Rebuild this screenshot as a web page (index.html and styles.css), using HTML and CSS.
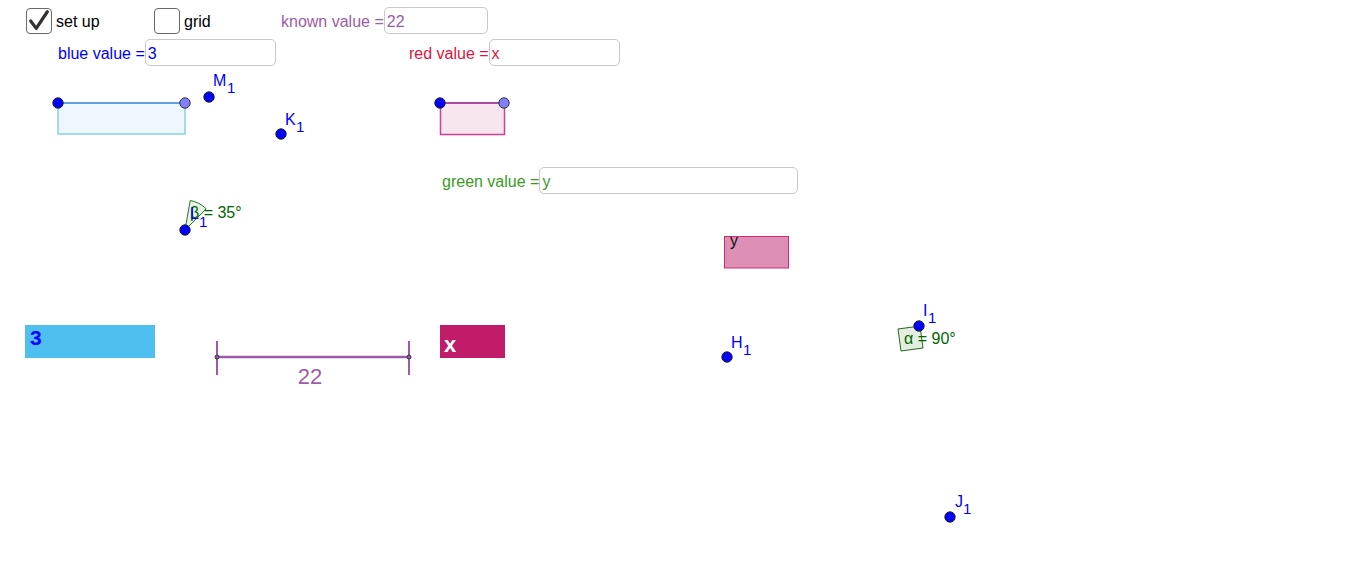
FILE: index.html
```html
<!DOCTYPE html>
<html>
<head>
<meta charset="utf-8">
<link rel="stylesheet" href="styles.css">
</head>
<body>
<div class="canvas">
  <svg class="board" width="1366" height="585" viewBox="0 0 1366 585" xmlns="http://www.w3.org/2000/svg">
    <!-- blue rectangle -->
    <rect x="58" y="103" width="127" height="31" fill="#eef7fd" stroke="#86cff1" stroke-width="1.5"/>
    <line x1="58" y1="103" x2="185" y2="103" stroke="#5f9fe2" stroke-width="2"/>
    <circle cx="58" cy="103" r="5.2" fill="#0000ff" stroke="#222" stroke-width="1"/>
    <circle cx="185" cy="103" r="5.2" fill="#8080ff" stroke="#333" stroke-width="1"/>

    <!-- red rectangle -->
    <rect x="440.5" y="103" width="64" height="31.5" fill="#f8e6ee" stroke="#d4408e" stroke-width="1.5"/>
    <line x1="440" y1="103" x2="504" y2="103" stroke="#aa4aa6" stroke-width="2"/>
    <circle cx="440" cy="103" r="5.2" fill="#0000ff" stroke="#222" stroke-width="1"/>
    <circle cx="504" cy="103" r="5.2" fill="#8080ff" stroke="#333" stroke-width="1"/>

    <!-- free points -->
    <circle cx="209" cy="97" r="5.2" fill="#0000ff" stroke="#222" stroke-width="1"/>
    <text class="lbl" x="213" y="86">M</text><text class="sub" x="227" y="93">1</text>

    <circle cx="281" cy="134" r="5.2" fill="#0000ff" stroke="#222" stroke-width="1"/>
    <text class="lbl" x="285" y="125">K</text><text class="sub" x="296" y="132">1</text>

    <!-- angle beta -->
    <path d="M185,230 L190.2,200.5 A30,30 0 0,1 206.2,208.8 Z" fill="#e8f2e4" stroke="#1e7a1e" stroke-width="1"/>
    <circle cx="185" cy="230" r="5.2" fill="#0000ff" stroke="#222" stroke-width="1"/>
    <text class="ang" x="190" y="218">β = 35°</text>
    <text class="lbl" x="190" y="219">L</text><text class="sub" x="199" y="227">1</text>

    <!-- y box -->
    <rect x="724.5" y="236.5" width="64" height="31.5" fill="#de8fb5" stroke="#cf2a77" stroke-width="1"/>
    <text class="dark" x="730" y="246">y</text>

    <!-- blue value box -->
    <rect x="25" y="325" width="130" height="33" fill="#4fbfef"/>
    <text class="three" x="30" y="345">3</text>

    <!-- segment -->
    <line x1="217" y1="357" x2="409" y2="357" stroke="#9c5ca8" stroke-width="2.5"/>
    <line x1="217" y1="341" x2="217" y2="375" stroke="#9c5ca8" stroke-width="2"/>
    <line x1="409" y1="341" x2="409" y2="375" stroke="#9c5ca8" stroke-width="2"/>
    <circle cx="217" cy="357" r="2" fill="#9c5ca8" stroke="#333" stroke-width="1"/>
    <circle cx="409" cy="357" r="2" fill="#9c5ca8" stroke="#333" stroke-width="1"/>
    <text class="seglbl" x="310" y="384" text-anchor="middle">22</text>

    <!-- red value box -->
    <rect x="440" y="325" width="65" height="33" fill="#c01c69"/>
    <text class="xval" x="444" y="352">x</text>

    <!-- H1 -->
    <circle cx="727" cy="357" r="5.2" fill="#0000ff" stroke="#222" stroke-width="1"/>
    <text class="lbl" x="731" y="348">H</text><text class="sub" x="743" y="355">1</text>

    <!-- alpha + I1 -->
    <polygon points="898,329 920,326 923,348 901,351" fill="#e4eee0" stroke="#1e6b1e" stroke-width="1"/>
    <text class="ang" x="904" y="344">α = 90°</text>
    <circle cx="919" cy="326" r="5.2" fill="#0000ff" stroke="#222" stroke-width="1"/>
    <text class="lbl" x="923" y="316">I</text><text class="sub" x="928" y="323">1</text>

    <!-- J1 -->
    <circle cx="950" cy="517" r="5.2" fill="#0000ff" stroke="#222" stroke-width="1"/>
    <text class="lbl" x="955" y="507">J</text><text class="sub" x="963" y="514">1</text>
  </svg>

  <label class="check check-setup">
    <span class="box">
      <svg width="26" height="26" viewBox="0 0 26 26"><path d="M4,13 L10,21 L22,3" fill="none" stroke="#333" stroke-width="3.5" stroke-linecap="round" stroke-linejoin="round"/></svg>
    </span>
    <span class="check-text">set up</span>
  </label>
  <label class="check check-grid">
    <span class="box"></span>
    <span class="check-text">grid</span>
  </label>

  <div class="field field-known"><span class="flabel">known value =</span><span class="input w104">22</span></div>
  <div class="field field-blue"><span class="flabel">blue value =</span><span class="input w131">3</span></div>
  <div class="field field-red"><span class="flabel">red value =</span><span class="input w131">x</span></div>
  <div class="field field-green"><span class="flabel">green value =</span><span class="input w259">y</span></div>
</div>
</body>
</html>
```

FILE: styles.css
```css
html, body {
  margin: 0;
  padding: 0;
  background: #ffffff;
}

.canvas {
  position: relative;
  width: 1366px;
  height: 585px;
  overflow: hidden;
  font-family: "Liberation Sans", Arial, sans-serif;
  font-size: 16px;
}

.board {
  position: absolute;
  left: 0;
  top: 0;
  font-family: "Liberation Sans", Arial, sans-serif;
}

.lbl { font-size: 16px; fill: #0000ff; }
.sub { font-size: 15px; fill: #0000ff; }
.ang { font-size: 16px; fill: #006400; }
.dark { font-size: 16px; fill: #111; }
.three { font-size: 21px; font-weight: bold; fill: #0000ff; }
.xval { font-size: 22px; font-weight: bold; fill: #ffffff; }
.seglbl { font-size: 22px; fill: #9c5ca8; }

.check {
  position: absolute;
  top: 7px;
  display: flex;
  align-items: center;
  gap: 4px;
  color: #000;
}
.check-setup { left: 26px; }
.check-grid { left: 154px; }

.check .box {
  width: 26px;
  height: 26px;
  box-sizing: border-box;
  border: 1.5px solid #6a6a6a;
  border-radius: 4px;
  display: flex;
  align-items: center;
  justify-content: center;
  background: #fff;
}
.check .box svg { display: block; }
.check-text { line-height: 26px; padding-top: 2px; }

.field {
  position: absolute;
  display: flex;
  align-items: center;
}
.field-known { left: 281px; top: 7px; color: #9c5ca8; }
.field-blue { left: 58px; top: 39px; color: #0000ff; }
.field-red { left: 409px; top: 39px; color: #dc143c; }
.field-green { left: 442px; top: 167px; color: #3a9a1e; }

.flabel { white-space: pre; padding-top: 3px; }

.input {
  box-sizing: border-box;
  height: 27px;
  line-height: 22px;
  padding: 3px 2px 0 2px;
  border: 1px solid #c8c8c8;
  border-radius: 5px;
  background: #fff;
}
.w104 { width: 104px; }
.w131 { width: 131px; }
.w259 { width: 259px; }
```
